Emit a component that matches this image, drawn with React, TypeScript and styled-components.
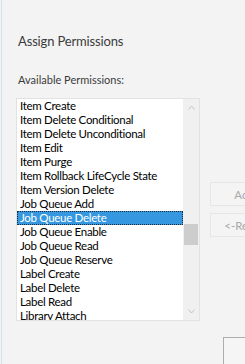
import React from 'react';
import styled, { createGlobalStyle } from 'styled-components';

const permissions = [
  'Item Create',
  'Item Delete Conditional',
  'Item Delete Unconditional',
  'Item Edit',
  'Item Purge',
  'Item Rollback LifeCycle State',
  'Item Version Delete',
  'Job Queue Add',
  'Job Queue Delete',
  'Job Queue Enable',
  'Job Queue Read',
  'Job Queue Reserve',
  'Label Create',
  'Label Delete',
  'Label Read',
  'Library Attach',
];

const GlobalStyle = createGlobalStyle`
  html, body {
    margin: 0;
    padding: 0;
    background: #f3f3f3;
    overflow: hidden;
  }
  body {
    font-family: Lato, "Noto Sans", sans-serif;
  }
`;

const Page = styled.div`
  width: 244px;
  height: 364px;
  box-sizing: border-box;
  border-left: 1px solid #d6e2ec;
  margin-left: 1px;
  overflow: hidden;
  display: flex;
  flex-direction: column;
`;

const Divider = styled.div`
  margin: 11px 0 0 20px;
  height: 2px;
  background: #e4e4e4;
`;

const Title = styled.h2`
  margin: 22px 0 0 16px;
  font-size: 13px;
  line-height: 16px;
  font-weight: 400;
  letter-spacing: -0.15px;
  color: #3b3b3b;
`;

const Label = styled.div`
  margin: 24px 0 0 16px;
  font-size: 11px;
  line-height: 14px;
  color: #3b3b3b;
`;

const Body = styled.div`
  display: flex;
  margin: 11px 0 0 14px;
  gap: 10px;
`;

const ListBox = styled.div`
  flex-shrink: 0;
  width: 184px;
  height: 223px;
  box-sizing: border-box;
  border: 1px solid #e2e2e2;
  background: #fff;
  display: flex;
  overflow: hidden;
`;

const Items = styled.ul`
  flex: 1;
  min-width: 0;
  margin: 0;
  padding: 0;
  list-style: none;
  overflow: hidden;
`;

const Item = styled.li<{ $selected?: boolean }>`
  height: 14px;
  line-height: 14px;
  padding-left: 3px;
  font-size: 11.5px;
  letter-spacing: -0.3px;
  white-space: nowrap;
  color: ${(p) => (p.$selected ? '#fff' : '#000')};
  background: ${(p) => (p.$selected ? '#3597e0' : 'transparent')};
  outline: ${(p) => (p.$selected ? '1px dotted #1c2a36' : 'none')};
  outline-offset: -1px;
`;

const ScrollBar = styled.div`
  flex-shrink: 0;
  width: 16px;
  background: #f0f0f0;
  display: flex;
  flex-direction: column;
  align-items: center;
`;

const Arrow = styled.div`
  height: 17px;
  width: 100%;
  display: flex;
  align-items: center;
  justify-content: center;
`;

const Track = styled.div`
  flex: 1;
  width: 100%;
  position: relative;
`;

const Thumb = styled.div`
  position: absolute;
  left: 1px;
  right: 1px;
  height: 21px;
  background: #cdcdcd;
`;

const Buttons = styled.div`
  flex-shrink: 0;
  display: flex;
  flex-direction: column;
  gap: 7px;
  margin-top: 84px;
`;

const Button = styled.button`
  width: 80px;
  height: 24px;
  box-sizing: border-box;
  border: 1px solid #e6e6e6;
  background: #f4f4f4;
  color: #a8a8a8;
  font-family: Lato, "Noto Sans", sans-serif;
  font-size: 11.5px;
  text-align: center;
  padding: 0;
  white-space: nowrap;
`;

const Footer = styled.div`
  display: flex;
  justify-content: flex-end;
  margin-top: 16px;
  margin-right: -20px;
`;

const FooterButton = styled.div`
  width: 42px;
  height: 30px;
  box-sizing: border-box;
  border: 1px solid #adadad;
  background: #f5f5f5;
`;

const Chevron = ({ up }: { up?: boolean }) => (
  <svg width="7" height="5" viewBox="0 0 7 5">
    <path
      d={up ? 'M0.5 4.5 L3.5 1 L6.5 4.5' : 'M0.5 0.5 L3.5 4 L6.5 0.5'}
      fill="none"
      stroke="#c2c2c2"
      strokeWidth="1"
    />
  </svg>
);

const App = () => {
  const selected = 'Job Queue Delete';
  const thumbTop = 108;

  return (
    <>
      <GlobalStyle />
      <Page>
        <Divider />
        <Title>Assign Permissions</Title>
        <Label>Available Permissions:</Label>
        <Body>
          <ListBox>
            <Items>
              {permissions.map((p) => (
                <Item key={p} $selected={p === selected}>
                  {p}
                </Item>
              ))}
            </Items>
            <ScrollBar>
              <Arrow>
                <Chevron up />
              </Arrow>
              <Track>
                <Thumb style={{ top: thumbTop }} />
              </Track>
              <Arrow>
                <Chevron />
              </Arrow>
            </ScrollBar>
          </ListBox>
          <Buttons>
            <Button>Add-&gt;</Button>
            <Button>&lt;-Remove</Button>
          </Buttons>
        </Body>
        <Footer>
          <FooterButton />
        </Footer>
      </Page>
    </>
  );
};

export default App;
